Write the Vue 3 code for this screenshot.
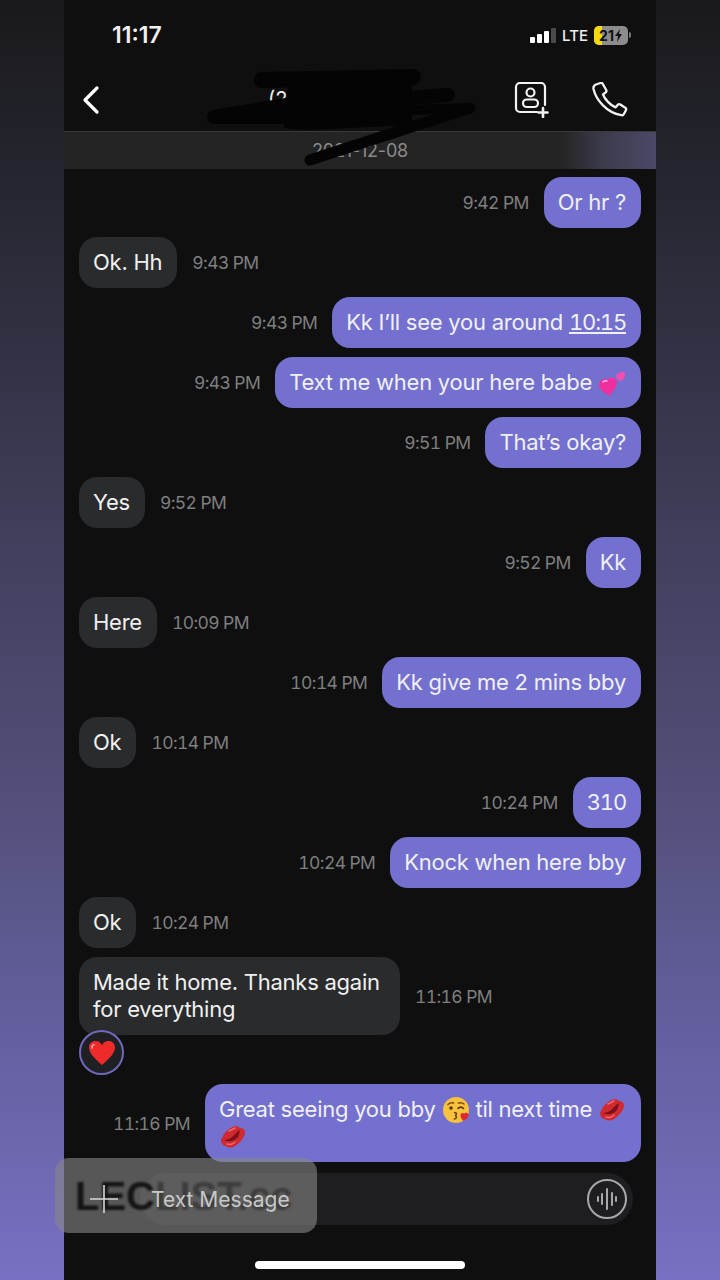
<template>
  <div class="page">
    <svg width="0" height="0" class="defs">
      <symbol id="lips" viewBox="0 0 28 28">
        <path d="M2 17C5 9 11 4 17 3c2 0 3 1 4 2 3 0 5 2 5 4 0 5-5 11-10 14-3 2-7 2-9 0-3 0-5-3-5-6z" fill="#cf2a30" />
        <path d="M5 17c5 0 9-3 13-8l3-2c-1 4-1 6-3 8-4 4-9 4-13 2z" fill="#7d1119" />
        <path d="M10 8c2-1 4-2 6-3M8 21c3 1 6 0 8-2" stroke="#ee6a6f" stroke-width="1.5" fill="none" stroke-linecap="round" />
      </symbol>
      <symbol id="kiss" viewBox="0 0 28 28">
        <circle cx="14" cy="14" r="13" fill="#f8c23c" />
        <path d="M6 8.500c1.500-1.500 3.500-2 5.500-1.500M16.500 7c2-.7 4-.2 5.500 1" stroke="#7d4a12" stroke-width="1.500" fill="none" stroke-linecap="round" />
        <circle cx="9" cy="12" r="1.800" fill="#5b3510" />
        <path d="M16 12.500c1.500-1.800 4-1.800 5.500 0" stroke="#5b3510" stroke-width="1.600" fill="none" stroke-linecap="round" />
        <path d="M12.500 16.500c2.500 0 2.500 2.500.5 3 2 .5 2 3-.5 3.500" stroke="#6b3d10" stroke-width="1.600" fill="none" stroke-linecap="round" />
        <path d="M22 18c1-2 5-1.500 4.500 1.500-.3 2.500-3 4.500-5 5.500-1.500-1.500-3.500-4-3-6 .5-2.500 3-2.500 3.500-1z" fill="#e0262f" />
      </symbol>
      <symbol id="hearts" viewBox="0 0 28 28">
        <path d="M21 5c.8-2.500 4.500-3 5.800-1 1.400 2.300-.6 6-4.300 8.500-2.500-1.700-4.800-4-4.300-6.300.4-2 2.200-2.200 2.800-1.200z" fill="#f24fb0" />
        <path d="M9 11c2-3 8-3 9.500.5 1.500 3.500-2 9-7 15.500C6 24 1 20 1 15.500 1 11 7 8.500 9 11z" fill="#ef2f9d" />
        <path d="M5 13c1-1 2.500-1.500 4-1" stroke="#ffb0dc" stroke-width="1.500" fill="none" stroke-linecap="round" />
      </symbol>
    </svg>

    <main class="phone">
      <div class="status">
        <span class="clock">11:17</span>
        <div class="status-right">
          <div class="signal">
            <i class="b1"></i><i class="b2"></i><i class="b3"></i><i class="b4"></i>
          </div>
          <span class="lte">LTE</span>
          <div class="battery">
            <span class="battery-fill"></span>
            <span class="battery-text">21</span>
            <svg class="bolt" width="9" height="13" viewBox="0 0 9 13"><path d="M6 0 1 7h3l-1 6 5-8H5z" fill="#111" /></svg>
          </div>
          <i class="battery-cap"></i>
        </div>
      </div>

      <header class="nav">
        <svg class="back" width="20" height="30" viewBox="0 0 20 30">
          <path d="M16 3 4 15l12 12" fill="none" stroke="#fff" stroke-width="3.200" stroke-linecap="round" stroke-linejoin="round" />
        </svg>
        <span class="name">(2</span>
        <div class="nav-actions">
          <svg width="36" height="36" viewBox="0 0 36 36" fill="none" stroke="#f2f2f2" stroke-width="2.200" stroke-linecap="round" stroke-linejoin="round">
            <path d="M23 30H6a4 4 0 0 1-4-4V5a4 4 0 0 1 4-4h21a4 4 0 0 1 4 4v18" />
            <circle cx="16.500" cy="10.500" r="4" />
            <rect x="9" y="17.500" width="15" height="7.500" rx="3.700" />
            <path d="M29 26v9M24.500 30.500h9" stroke-width="2.600" />
          </svg>
          <svg width="36" height="36" viewBox="0 0 36 36" fill="none" stroke="#f2f2f2" stroke-width="2.300" stroke-linejoin="round">
            <path d="M4 2.500 8.500 1c1-.3 1.800.1 2.300 1l3.400 6c.5 1 .3 1.800-.5 2.400l-2.700 2c1.500 4.600 7.500 11 12.500 13l2.300-2.600c.7-.8 1.600-.9 2.500-.3l5 3.300c.9.600 1.100 1.500.6 2.400l-2 3.800c-.5 1-1.500 1.500-2.600 1.200C15 31 4 18 1.500 7c-.3-2 .7-3.800 2.500-4.500z" />
          </svg>
        </div>
      </header>

      <div class="date-band">2021-12-08</div>

      <section class="thread">
        <template v-for="(m, i) in messages" :key="i">
          <div class="row" :class="m.out ? 'row-out' : 'row-in'">
            <div class="bubble" :class="m.out ? 'bubble-out' : 'bubble-in'">
              <template v-for="(p, j) in m.parts" :key="j">
                <span v-if="typeof p === 'string'">{{ p }}</span>
                <u v-else-if="p.u" class="num">{{ p.u }}</u>
                <span v-else-if="p.n" class="num">{{ p.n }}</span>
                <svg v-else class="emoji" viewBox="0 0 28 28"><use :href="'#' + p.icon" /></svg>
              </template>
            </div>
            <span class="time">{{ m.time }}</span>
          </div>
          <div v-if="m.reaction" class="reaction">
            <svg width="28" height="26" viewBox="0 0 28 26">
              <path d="M14 25C6 18 1 13 1 7.500 1 3.500 4 1 7.500 1c3 0 5 1.500 6.500 4 1.500-2.500 3.500-4 6.500-4C24 1 27 3.500 27 7.500 27 13 22 18 14 25z" fill="#ee2a2a" />
              <path d="M6 4.500C4.500 5 3.800 6.500 4 8" stroke="#ffa5a0" stroke-width="1.500" fill="none" stroke-linecap="round" />
            </svg>
          </div>
        </template>
      </section>

      <div class="composer">
        <svg class="plus" width="30" height="30" viewBox="0 0 30 30">
          <path d="M15 1v28M1 15h28" stroke="#d8d8d8" stroke-width="1.600" />
        </svg>
        <div class="input">
          <span class="placeholder">Text Message</span>
          <div class="voice">
            <svg width="22" height="24" viewBox="0 0 22 24" stroke="#a8a8a8" stroke-width="2" stroke-linecap="round">
              <path d="M2 10v4M6 7v10M11 2v20M16 6v12M20 10v4" />
            </svg>
          </div>
        </div>
      </div>

      <div class="home-bar"></div>

      <!-- scribble that hides the contact name -->
      <svg class="scribble" width="280" height="100" viewBox="0 0 280 100" fill="#040404" stroke="#040404" stroke-linecap="round" stroke-linejoin="round">
        <path d="M56 12 207 9" stroke-width="16" fill="none" />
        <path d="M84 16 204 10v45L100 60 80 58z" stroke-width="4" />
        <path d="M8 49 80 37l25-7" stroke-width="14" fill="none" />
        <path d="M8 50 100 50" stroke-width="12" fill="none" />
        <path d="M204 30l38-3" stroke-width="14" fill="none" />
        <path d="M204 42l60-2" stroke-width="10" fill="none" />
        <path d="M264 40 104 92" stroke-width="11" fill="none" />
      </svg>

      <!-- site watermark -->
      <div class="watermark">
        <span class="wm-dark">LEC</span><span class="wm-light">LIST.cc</span>
      </div>
    </main>
  </div>
</template>

<script setup>
const messages = [
  { out: true, time: '9:42 PM', parts: ['Or hr ?'] },
  { out: false, time: '9:43 PM', parts: ['Ok. Hh'] },
  { out: true, time: '9:43 PM', parts: ['Kk I’ll see you around ', { u: '10:15' }] },
  { out: true, time: '9:43 PM', parts: ['Text me when your here babe ', { icon: 'hearts' }] },
  { out: true, time: '9:51 PM', parts: ['That’s okay?'] },
  { out: false, time: '9:52 PM', parts: ['Yes'] },
  { out: true, time: '9:52 PM', parts: ['Kk'] },
  { out: false, time: '10:09 PM', parts: ['Here'] },
  { out: true, time: '10:14 PM', parts: ['Kk give me 2 mins bby'] },
  { out: false, time: '10:14 PM', parts: ['Ok'] },
  { out: true, time: '10:24 PM', parts: [{ n: '310' }] },
  { out: true, time: '10:24 PM', parts: ['Knock when here bby'] },
  { out: false, time: '10:24 PM', parts: ['Ok'] },
  { out: false, time: '11:16 PM', parts: ['Made it home. Thanks again for everything'], reaction: true },
  {
    out: true,
    time: '11:16 PM',
    parts: ['Great seeing you bby ', { icon: 'kiss' }, ' til next time ', { icon: 'lips' }, ' ', { icon: 'lips' }]
  }
]
</script>

<style>
html,
body {
  margin: 0;
  background: #17151f;
}
</style>

<style scoped>
.page {
  width: 720px;
  height: 1280px;
  overflow: hidden;
  display: flex;
  justify-content: center;
  background: linear-gradient(180deg, #19191c 0%, #2d2d3c 22%, #403f5c 42%, #524f79 62%, #635f9e 80%, #7870c2 100%);
  font-family: Inter, "Liberation Sans", sans-serif;
}

.defs {
  position: absolute;
}

.phone {
  position: relative;
  width: 592px;
  height: 1280px;
  background: #0f0f10;
  color: #f0f0f0;
}

.status {
  height: 70px;
  box-sizing: border-box;
  padding: 22px 25px 0 48px;
  display: flex;
  justify-content: space-between;
  align-items: flex-start;
}

.clock {
  font-size: 23px;
  line-height: 26px;
  font-weight: 600;
}

.status-right {
  display: flex;
  align-items: center;
  height: 26px;
}

.signal {
  display: flex;
  align-items: flex-end;
  gap: 2px;
  height: 15px;
  margin-right: 6px;
}

.signal i {
  width: 5px;
  border-radius: 1px;
  background: #fff;
}

.b1 { height: 6px; }
.b2 { height: 9px; }
.b3 { height: 12px; }
.signal .b4 { height: 15px; background: #4a4a4a; }

.lte {
  font-size: 15px;
  font-weight: 500;
  margin-right: 6px;
}

.battery {
  position: relative;
  width: 34px;
  height: 19px;
  border-radius: 5px;
  overflow: hidden;
  background: #8c8c8c;
  display: flex;
  align-items: center;
  justify-content: center;
  color: #111;
  font-size: 14px;
  font-weight: 700;
}

.battery-fill {
  position: absolute;
  left: 0;
  top: 0;
  bottom: 0;
  width: 8px;
  background: #f6d90f;
}

.battery-text {
  position: relative;
}

.bolt {
  position: relative;
}

.battery-cap {
  width: 2px;
  height: 6px;
  margin-left: 1px;
  border-radius: 0 2px 2px 0;
  background: #777;
}

.nav {
  height: 62px;
  box-sizing: border-box;
  border-bottom: 1px solid #3a3a3a;
  padding: 0 28px 0 17px;
  display: flex;
  align-items: flex-start;
  position: relative;
}

.back {
  margin-top: 15px;
}

.name {
  position: absolute;
  left: 204px;
  top: 17px;
  font-size: 20px;
  color: #eee;
}

.nav-actions {
  margin-left: auto;
  display: flex;
  gap: 42px;
  margin-top: 12px;
}

.date-band {
  height: 37px;
  line-height: 37px;
  text-align: center;
  font-size: 18px;
  letter-spacing: -0.2px;
  color: #8a8a8a;
  background: linear-gradient(90deg, #232323 0%, #242424 84%, #3c3b4c 91%, #4b4968 100%);
}

.thread {
  padding: 8px 15px 0;
  display: flex;
  flex-direction: column;
  gap: 9px;
}

.row {
  display: flex;
  align-items: center;
  gap: 15px;
}

.row-out {
  flex-direction: row-reverse;
}

.bubble {
  box-sizing: border-box;
  min-height: 51px;
  padding: 12px 15px 12px 14px;
  border-radius: 18px;
  font-size: 22px;
  line-height: 27px;
  letter-spacing: -0.25px;
}

.num {
  font-variant-numeric: tabular-nums;
  letter-spacing: -1.2px;
}

.bubble-out {
  max-width: 436px;
  background: #7470cf;
}

.bubble-in {
  max-width: 321px;
  background: #2a2b2d;
}

.emoji {
  width: 28px;
  height: 28px;
  margin: -6px 0;
  vertical-align: -1px;
}

.time {
  font-size: 17.500px;
  letter-spacing: -0.6px;
  font-variant-numeric: tabular-nums;
  color: #7f7f7f;
}

.reaction {
  display: flex;
  align-items: center;
  justify-content: center;
  box-sizing: border-box;
  width: 45px;
  height: 45px;
  margin-top: -14px;
  border: 2px solid #6f69bb;
  border-radius: 50%;
  background: #1f2024;
}

.composer {
  margin-top: 11px;
  height: 52px;
  display: flex;
  align-items: center;
  padding: 0 23px 0 25px;
}

.plus {
  margin-right: 21px;
  position: relative;
  z-index: 2;
}

.input {
  flex: 1;
  height: 52px;
  box-sizing: border-box;
  padding: 0 6px 0 11px;
  border-radius: 26px;
  background: #1e1e20;
  display: flex;
  align-items: center;
  justify-content: space-between;
}

.placeholder {
  font-size: 21px;
  color: #c8c8c8;
  position: relative;
  z-index: 2;
}

.voice {
  width: 36px;
  height: 36px;
  border: 2px solid #a8a8a8;
  border-radius: 50%;
  display: flex;
  align-items: center;
  justify-content: center;
}

.home-bar {
  width: 210px;
  height: 8px;
  margin: 36px auto 0;
  border-radius: 4px;
  background: #fff;
}

.scribble {
  position: absolute;
  left: 142px;
  top: 68px;
}

.watermark {
  position: absolute;
  left: -9px;
  top: 1158px;
  width: 262px;
  height: 75px;
  box-sizing: border-box;
  padding-left: 20px;
  line-height: 77px;
  border-radius: 14px;
  background: rgba(135, 135, 135, 0.6);
  font-family: "Liberation Sans", Arial, sans-serif;
  font-size: 40px;
  font-weight: 700;
  white-space: nowrap;
}

.wm-dark {
  color: #141414;
  filter: blur(0.8px);
}

.wm-light {
  color: #3d3d3d;
  filter: blur(0.8px);
}
</style>
